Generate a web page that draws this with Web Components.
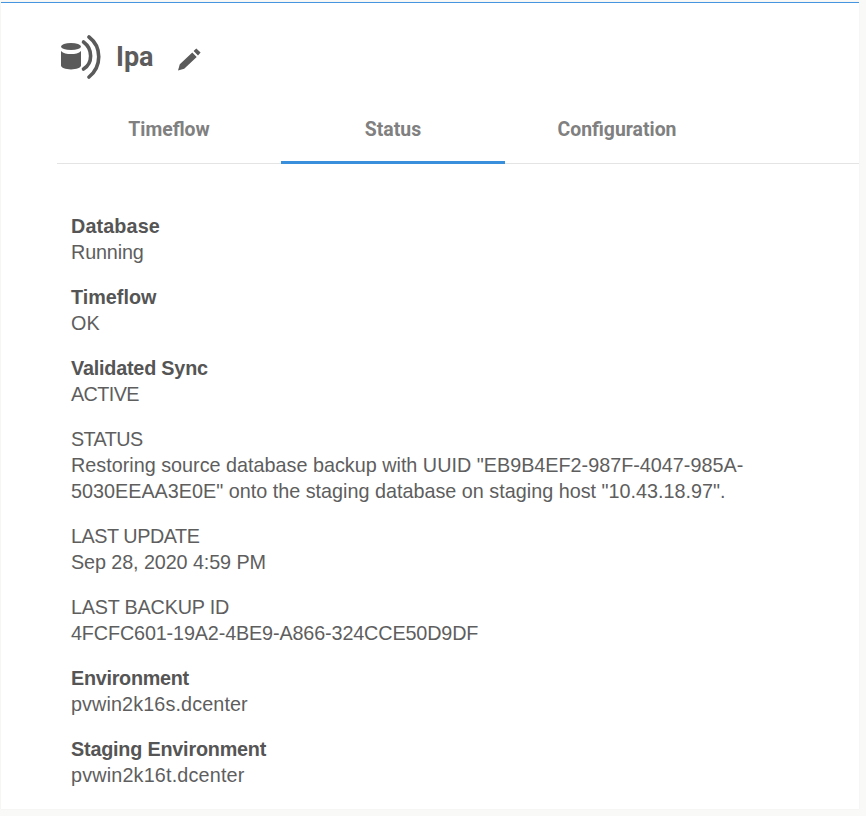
<!DOCTYPE html>
<html><head><meta charset="utf-8"><style>
html,body{margin:0;padding:0;background:#f9f9f8;}
body{width:866px;height:816px;overflow:hidden;font-family:"Liberation Sans",sans-serif;color:#555}
</style></head><body>
<status-card>
  <db-header name="Ipa"></db-header>
  <tab-bar>
    <tab-item>Timeflow</tab-item>
    <tab-item active>Status</tab-item>
    <tab-item>Configuration</tab-item>
  </tab-bar>
  <status-list>
    <status-field label="Database" strong style="--l:.12px;--v:-.14px">Running</status-field>
    <status-field label="Timeflow" strong>OK</status-field>
    <status-field label="Validated Sync" strong style="--l:-.2px;--v:-.6px">ACTIVE</status-field>
    <status-field label="STATUS" style="--l:-.6px">Restoring source database backup with UUID "EB9B4EF2-987F-4047-985A-<br>5030EEAA3E0E" onto the staging database on staging host "10.43.18.97".</status-field>
    <status-field label="LAST UPDATE" style="--l:-.45px;--v:-.1px">Sep 28, 2020 4:59 PM</status-field>
    <status-field label="LAST BACKUP ID" style="--l:-.2px;--v:-.14px">4FCFC601-19A2-4BE9-A866-324CCE50D9DF</status-field>
    <status-field label="Environment" strong style="--l:-.27px;--v:.11px">pvwin2k16s.dcenter</status-field>
    <status-field label="Staging Environment" strong style="--l:-.2px;--v:.17px">pvwin2k16t.dcenter</status-field>
  </status-list>
</status-card>
<script>
function def(name, html, extra){
  customElements.define(name, class extends HTMLElement{
    constructor(){super();this.attachShadow({mode:'open'}).innerHTML=html;}
    connectedCallback(){ if(extra) extra(this); }
  });
}
def('status-card',`<style>:host{display:block;box-sizing:border-box;width:858px;height:807px;margin:2px 0 0 1px;background:#fff;border-top:1.5px solid #4595e0;box-shadow:0 0 1px #e6e6e6}</style><slot></slot>`);
def('db-header',`<style>:host{display:flex;align-items:center;height:110px;padding:0 0 0 58px;box-sizing:border-box;margin-bottom:-6px}
svg{display:block;flex:none}
.n{font:700 27px Roboto,sans-serif;color:#5c5c5c;margin:0 23px 0 13px;position:relative;top:-1px}
.p{position:relative;top:1px}</style>
<svg width="44" height="46" viewBox="0 0 44 46" fill="none"><ellipse cx="12" cy="11.500" rx="10" ry="3.600" fill="#5a5a5a"/><path d="M2 16c2 2.300 6 3.100 10 3.100s8-.8 10-3.100v14.500c0 2.300-4.500 3.900-10 3.900S2 32.800 2 30.500z" fill="#5a5a5a"/><path d="M24.500 7C34 14 34 28 24.500 34" stroke="#5a5a5a" stroke-width="3.600" stroke-linecap="round"/><path d="M30 2C43 12 43 31 30 42" stroke="#5a5a5a" stroke-width="3.600" stroke-linecap="round"/></svg>
<span class="n"></span>
<svg class="p" width="24" height="24" viewBox="0 0 24 24"><path d="M1 23.500l1.800-6.200L15.300 5.500l4.400 4.500L7.200 21.700z M16.600 4.100l2.700-2.500 4.300 3.800-2.600 3.100z" fill="#5a5a5a"/></svg>`,
  el=>{el.shadowRoot.querySelector('.n').textContent=el.getAttribute('name')});
def('tab-bar',`<style>:host{display:flex;margin-left:56px;width:802px;border-bottom:1px solid #e4e4e4;box-sizing:border-box}</style><slot></slot>`);
def('tab-item',`<style>:host{display:flex;align-items:center;justify-content:center;box-sizing:border-box;width:224px;height:57px;padding-bottom:10px;font:700 19.4px Roboto,sans-serif;color:#808080;margin-bottom:-1px;border-bottom:3px solid transparent}
:host([active]){border-bottom-color:#3a8fdc}</style><slot></slot>`);
def('status-list',`<style>:host{display:flex;flex-direction:column;gap:19px;padding:49px 0 0 70px}</style><slot></slot>`);
def('status-field',`<style>:host{display:block;font:19.800px/26px "Liberation Sans",sans-serif;color:#5e5e5e;letter-spacing:var(--v,0)}
.l{display:block;letter-spacing:var(--l,0)}:host([strong]) .l{font-weight:700;color:#555}</style><span class="l"></span><slot></slot>`,
  el=>{el.shadowRoot.querySelector('.l').textContent=el.getAttribute('label')});
</script>
</body></html>
